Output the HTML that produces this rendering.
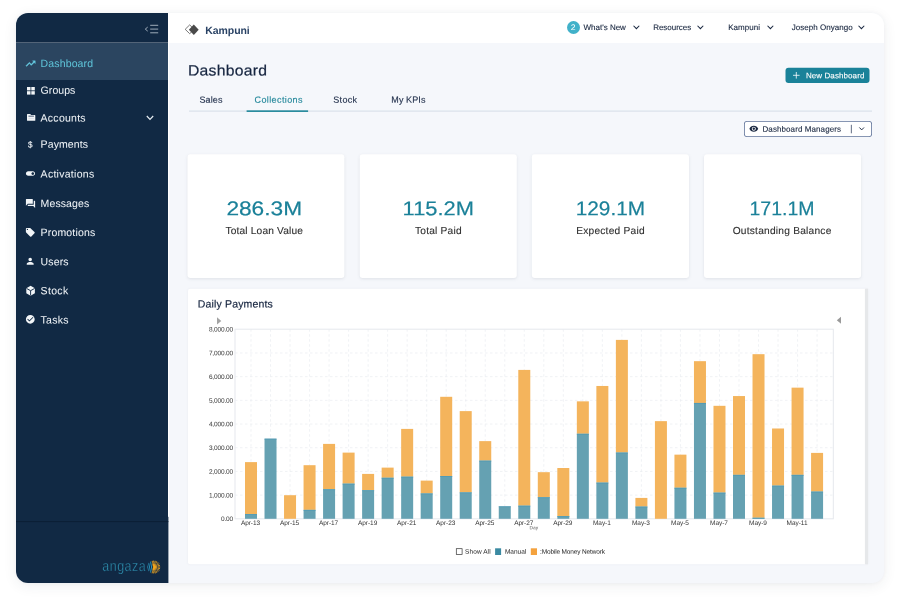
<!DOCTYPE html>
<html lang="en">
<head>
<meta charset="utf-8">
<title>Dashboard</title>
<style>
*{box-sizing:border-box;margin:0;padding:0}
html,body{width:900px;height:602px;background:#fff;overflow:hidden;font-family:"Liberation Sans",sans-serif;}
body{position:relative}
.frame{position:absolute;left:16px;top:13px;width:868px;height:570px;border-radius:12px;overflow:hidden;background:#f5f7fb;box-shadow:0 3px 14px rgba(40,50,70,.075),0 0 4px rgba(40,50,70,.04)}
.o{position:absolute;left:-16px;top:-13px;width:900px;height:602px;will-change:transform}
.abs{position:absolute}
.sidebar{position:absolute;left:16px;top:13px;width:152px;height:570px;background:#112944}
.sidehead{position:absolute;left:16px;top:13px;width:152px;height:30px;border-bottom:1px solid rgba(255,255,255,.28)}
.active{position:absolute;left:16px;top:43px;width:152px;height:37px;background:#2b4560}
.sidefoot{position:absolute;left:16px;top:517px;width:153px;height:66px;background:#112944}.sideline{position:absolute;left:16px;top:521px;width:152.500px;height:1px;background:#0b1d33}
.topbar{position:absolute;left:168px;top:13px;width:716px;height:30px;background:#fff}
.card{position:absolute;background:#fff;border-radius:3px;box-shadow:0 1px 3px rgba(30,40,60,.10)}
.btn{position:absolute;left:785.3px;top:67.8px;width:84.3px;height:15.2px;border-radius:3px;background:#1a8299}
.dd{position:absolute;left:744.2px;top:121.2px;width:127.8px;height:15.5px;border-radius:3px;background:#fff;box-shadow:inset 0 0 0 .8px #60749a}
svg{position:absolute;overflow:visible}
svg text{font-family:"Liberation Sans",sans-serif;white-space:pre}
</style>
</head>
<body>
<div class="frame"><div class="o">

<nav class="sidebar"></nav><div class="sidehead"></div><div class="active"></div><div class="abs" style="left:168px;top:43px;width:1px;height:474px;background:#fff"></div><svg style="left:0;top:0" width="900" height="602" viewBox="0 0 900 602"><rect x="160" y="516.800" width="8.400" height="70" fill="#112944"/><rect x="16" y="521.200" width="152.400" height="0.900" fill="#0b1d33"/></svg>
<svg style="left:144px;top:24px" width="15" height="10" viewBox="0 0 15 10"><g stroke="#c3cdd8" stroke-width="0.8" fill="none"><path d="M6.2 1.3H14.2M6.2 5.1H14.2M6.2 8.8H14.2"/><path d="M3.7 3.1L1.3 5.1L3.7 7.100" stroke-width="0.8"/></g></svg>
<svg style="left:25.1px;top:57.5px" width="11.2" height="11.2" viewBox="0 0 24 24" preserveAspectRatio="none"><path fill="#68cfe5" stroke="#68cfe5" stroke-width="0.8" d="M16 6l2.29 2.29-4.88 4.88-4-4L2 16.59 3.41 18l6-6 4 4 6.3-6.29L22 12V6z"/></svg>
<svg style="left:26.9px;top:87.2px" width="7.8" height="7.6" viewBox="0 0 78 76" preserveAspectRatio="none"><g fill="#f2f5f8"><rect x="0" y="0" width="35" height="34"/><rect x="43" y="0" width="35" height="34"/><rect x="0" y="42" width="35" height="34"/><rect x="43" y="42" width="35" height="34"/></g></svg>
<svg style="left:26.6px;top:113.9px" width="8.3" height="6.9" viewBox="0 0 86 70" preserveAspectRatio="none"><path fill="#f2f5f8" d="M6 0H34L42 9H80Q86 9 86 15V63Q86 69 80 69H6Q0 69 0 63V6Q0 0 6 0Z"/><path d="M15 22H72" stroke="#3b4f6b" stroke-width="9"/><path d="M15 45H72" stroke="#c9d2dc" stroke-width="6"/></svg>
<svg style="left:25.2px;top:168.2px" width="11" height="11" viewBox="0 0 24 24" preserveAspectRatio="none"><path fill="#f2f5f8" d="M17 7H7c-2.76 0-5 2.24-5 5s2.24 5 5 5h10c2.76 0 5-2.24 5-5s-2.24-5-5-5zm0 8c-1.66 0-3-1.34-3-3s1.34-3 3-3 3 1.34 3 3-1.34 3-3 3z"/></svg>
<svg style="left:24.98px;top:197.6px" width="11.04" height="10.8" viewBox="0 0 24 24" preserveAspectRatio="none"><path fill="#f2f5f8" d="M21 6h-2v9H6v2c0 .55.45 1 1 1h11l4 4V7c0-.55-.45-1-1-1zm-4 6V3c0-.55-.45-1-1-1H3c-.55 0-1 .45-1 1v14l4-4h10c.55 0 1-.45 1-1z"/></svg>
<svg style="left:24.7px;top:226.55px" width="10.6" height="10.6" viewBox="0 0 24 24" preserveAspectRatio="none"><path fill="#f2f5f8" d="M21.41 11.58l-9-9C12.05 2.22 11.55 2 11 2H4c-1.1 0-2 .9-2 2v7c0 .55.22 1.05.59 1.42l9 9c.36.36.86.58 1.41.58.55 0 1.05-.22 1.41-.59l7-7c.37-.36.59-.86.59-1.41 0-.55-.23-1.06-.59-1.42zM5.5 7C4.67 7 4 6.33 4 5.5S4.67 4 5.5 4 7 4.67 7 5.5 6.33 7 5.5 7z"/></svg>
<svg style="left:24.9px;top:256.0px" width="10.4" height="10.4" viewBox="0 0 24 24" preserveAspectRatio="none"><path fill="#f2f5f8" d="M12 12c2.21 0 4-1.79 4-4s-1.79-4-4-4-4 1.79-4 4 1.79 4 4 4zm0 2c-2.67 0-8 1.34-8 4v2h16v-2c0-2.66-5.33-4-8-4z"/></svg>
<svg style="left:24.9px;top:284.7px" width="11.2" height="11.4" viewBox="0 0 24 24" preserveAspectRatio="none"><path fill="#f2f5f8" d="M12 1.5L21.2 6.6V17.4L12 22.5L2.8 17.4V6.600Z"/><path d="M12 22V12M12 12L3.2 7.2M12 12L20.8 7.2" stroke="#112944" stroke-width="2" fill="none"/></svg>
<svg style="left:25.0px;top:314.4px" width="10.6" height="10.6" viewBox="0 0 24 24" preserveAspectRatio="none"><path fill="#f2f5f8" d="M12 2C6.48 2 2 6.48 2 12s4.48 10 10 10 10-4.48 10-10S17.52 2 12 2zm-2 15l-5-5 1.41-1.41L10 14.17l7.59-7.59L19 8l-9 9z"/></svg>
<svg style="left:146px;top:114.5px" width="8" height="6" viewBox="0 0 8 6"><path d="M0.8 1L4 4.3L7.2 1" stroke="#e8edf2" stroke-width="1.2" fill="none"/></svg>
<svg style="left:0;top:0" width="900" height="602" viewBox="0 0 900 602"><defs><clipPath id="sunclip"><circle cx="153.8" cy="567" r="6.600"/></clipPath></defs><g clip-path="url(#sunclip)"><g fill="none" stroke="#2d9fc6" stroke-width="0.950"><circle cx="139.2" cy="567" r="8.200"/><circle cx="139.2" cy="567" r="10.250"/><circle cx="139.2" cy="567" r="12.350"/></g><g stroke="#f7aa20" stroke-width="0.85" stroke-dasharray="3.300 0.500 3"><path d="M153.30 566.51L151.90 559.65"/><path d="M153.43 566.50L153.79 559.51"/><path d="M153.55 566.52L155.66 559.85"/><path d="M153.66 566.58L157.37 560.64"/><path d="M153.76 566.66L158.84 561.84"/><path d="M153.84 566.76L159.96 563.36"/><path d="M153.88 566.87L160.66 565.12"/><path d="M153.90 567.00L160.90 567.00"/><path d="M153.88 567.13L160.66 568.88"/><path d="M153.84 567.24L159.96 570.64"/><path d="M153.76 567.34L158.84 572.16"/><path d="M153.66 567.42L157.37 573.36"/><path d="M153.55 567.48L155.66 574.15"/><path d="M153.43 567.50L153.79 574.49"/><path d="M153.30 567.49L151.90 574.35"/></g><ellipse cx="154.300" cy="567" rx="1.400" ry="3" fill="#f5a51c" opacity=".35"/></g></svg>
<header class="topbar"></header>
<svg style="left:184px;top:24px" width="15" height="12" viewBox="0 0 15 12"><path d="M5.7 0.9L10.2 5.3L5.7 9.7L1.2 5.3Z" fill="#fff" stroke="#555" stroke-width="0.8"/><path d="M9.8 0.4L14.7 5.65L9.8 10.9L4.9 5.65Z" fill="#4a4a4a"/></svg>
<div class="abs" style="left:567px;top:20.7px;width:13px;height:13px;border-radius:50%;background:#41b1c9"></div>
<svg style="left:632.5px;top:25.2px" width="6.8" height="4.7" viewBox="0 0 6.4 4.4"><path d="M0.5 0.7L3.2 3.5L5.9 0.7" stroke="#18263f" stroke-width="0.98" fill="none"/></svg>
<svg style="left:696.6999999999999px;top:25.2px" width="6.8" height="4.7" viewBox="0 0 6.4 4.4"><path d="M0.5 0.7L3.2 3.5L5.9 0.7" stroke="#18263f" stroke-width="0.98" fill="none"/></svg>
<svg style="left:767.1999999999999px;top:25.2px" width="6.8" height="4.7" viewBox="0 0 6.4 4.4"><path d="M0.5 0.7L3.2 3.5L5.9 0.7" stroke="#18263f" stroke-width="0.98" fill="none"/></svg>
<svg style="left:858.0px;top:25.2px" width="6.8" height="4.7" viewBox="0 0 6.4 4.4"><path d="M0.5 0.7L3.2 3.5L5.9 0.7" stroke="#18263f" stroke-width="0.98" fill="none"/></svg>
<svg style="left:0;top:0" width="900" height="120" viewBox="0 0 900 120"><rect x="189" y="110.550" width="683" height="1.100" fill="#d7dfe9"/><rect x="246.600" y="110.300" width="61.500" height="1.700" fill="#2a8c9e"/></svg>

<svg style="left:0;top:0" width="900" height="100" viewBox="0 0 900 100"><rect x="785.5" y="67.8" width="84" height="15.2" rx="3" fill="#1a8299"/></svg>
<svg style="left:792.8px;top:72.2px" width="6.600" height="6.600" viewBox="0 0 6.6 6.6"><path d="M3.3 0V6.600M0 3.3H6.600" stroke="#fff" stroke-width="0.8"/></svg>
<div class="dd"></div>
<svg style="left:748.7px;top:124.0px" width="9.6" height="9.6" viewBox="0 0 24 24" preserveAspectRatio="none"><path fill="#18263f" d="M12 4.5C7 4.5 2.73 7.61 1 12c1.73 4.39 6 7.5 11 7.5s9.27-3.11 11-7.5c-1.73-4.39-6-7.5-11-7.5zM12 17c-2.76 0-5-2.24-5-5s2.24-5 5-5 5 2.24 5 5-2.24 5-5 5zm0-8c-1.66 0-3 1.34-3 3s1.34 3 3 3 3-1.34 3-3-1.34-3-3-3z"/></svg>
<svg style="left:850px;top:124px" width="3" height="10" viewBox="0 0 3 10"><path d="M1.350 0.800V9.300" stroke="#2c3b5a" stroke-width="0.75"/></svg>
<svg style="left:859px;top:127.3px" width="5.4" height="3.6" viewBox="0 0 5.4 3.6"><path d="M0.4 0.5L2.7 2.9L5 0.5" stroke="#18263f" stroke-width="0.95" fill="none"/></svg>
<svg style="left:0;top:0;filter:drop-shadow(0 1px 1.500px rgba(30,40,60,.10))" width="900" height="602" viewBox="0 0 900 602"><rect x="187.5" y="154.200" width="156.9" height="123.900" rx="3" fill="#fff"/><rect x="359.7" y="154.200" width="157.1" height="123.900" rx="3" fill="#fff"/><rect x="531.8" y="154.200" width="157.2" height="123.900" rx="3" fill="#fff"/><rect x="704.0" y="154.200" width="157.1" height="123.900" rx="3" fill="#fff"/></svg>
<svg style="left:0;top:0;filter:drop-shadow(0 0.500px 1px rgba(30,40,60,.06))" width="900" height="602" viewBox="0 0 900 602"><rect x="188" y="288.700" width="680" height="275.600" rx="2" fill="#fff"/></svg>
<svg style="left:0;top:0" width="900" height="602" viewBox="0 0 900 602"><rect x="864.900" y="288.700" width="3.100" height="275.600" fill="#e6e8ea"/></svg>
<svg style="left:0;top:0" width="900" height="602" viewBox="0 0 900 602"><rect x="235" y="329.2" width="598.3" height="189.6" fill="#fff" stroke="#e5e8ed" stroke-width="1"/><path d="M235 495.11H833.3M235 471.42H833.3M235 447.73H833.3M235 424.04H833.3M235 400.35H833.3M235 376.66H833.3M235 352.97H833.3M251.00 329.2V518.8M270.52 329.2V518.8M290.04 329.2V518.8M309.56 329.2V518.8M329.08 329.2V518.8M348.60 329.2V518.8M368.12 329.2V518.8M387.64 329.2V518.8M407.16 329.2V518.8M426.68 329.2V518.8M446.20 329.2V518.8M465.72 329.2V518.8M485.24 329.2V518.8M504.76 329.2V518.8M524.28 329.2V518.8M543.80 329.2V518.8M563.32 329.2V518.8M582.84 329.2V518.8M602.36 329.2V518.8M621.88 329.2V518.8M641.40 329.2V518.8M660.92 329.2V518.8M680.44 329.2V518.8M699.96 329.2V518.8M719.48 329.2V518.8M739.00 329.2V518.8M758.52 329.2V518.8M778.04 329.2V518.8M797.56 329.2V518.8M817.08 329.2V518.8" stroke="#eaecf0" stroke-width="0.7" stroke-dasharray="2.5 2.5" fill="none"/><rect x="245.00" y="462.11" width="12" height="52.00" fill="#f4b45c"/><rect x="245.00" y="514.11" width="12" height="4.69" fill="#65a1b2"/><rect x="245.00" y="514.11" width="12" height="0.8" fill="#4f9ab4"/><rect x="264.52" y="438.70" width="12" height="80.10" fill="#65a1b2"/><rect x="264.52" y="438.70" width="12" height="0.8" fill="#4f9ab4"/><rect x="284.04" y="495.20" width="12" height="23.60" fill="#f4b45c"/><rect x="303.56" y="465.19" width="12" height="44.70" fill="#f4b45c"/><rect x="303.56" y="509.89" width="12" height="8.91" fill="#65a1b2"/><rect x="303.56" y="509.89" width="12" height="0.8" fill="#4f9ab4"/><rect x="323.08" y="443.89" width="12" height="45.41" fill="#f4b45c"/><rect x="323.08" y="489.31" width="12" height="29.49" fill="#65a1b2"/><rect x="323.08" y="489.31" width="12" height="0.8" fill="#4f9ab4"/><rect x="342.60" y="452.61" width="12" height="31.08" fill="#f4b45c"/><rect x="342.60" y="483.69" width="12" height="35.11" fill="#65a1b2"/><rect x="342.60" y="483.69" width="12" height="0.8" fill="#4f9ab4"/><rect x="362.12" y="473.91" width="12" height="16.39" fill="#f4b45c"/><rect x="362.12" y="490.30" width="12" height="28.50" fill="#65a1b2"/><rect x="362.12" y="490.30" width="12" height="0.8" fill="#4f9ab4"/><rect x="381.64" y="467.61" width="12" height="10.19" fill="#f4b45c"/><rect x="381.64" y="477.79" width="12" height="41.01" fill="#65a1b2"/><rect x="381.64" y="477.79" width="12" height="0.8" fill="#4f9ab4"/><rect x="401.16" y="428.90" width="12" height="47.81" fill="#f4b45c"/><rect x="401.16" y="476.70" width="12" height="42.10" fill="#65a1b2"/><rect x="401.16" y="476.70" width="12" height="0.8" fill="#4f9ab4"/><rect x="420.68" y="480.61" width="12" height="12.89" fill="#f4b45c"/><rect x="420.68" y="493.50" width="12" height="25.30" fill="#65a1b2"/><rect x="420.68" y="493.50" width="12" height="0.8" fill="#4f9ab4"/><rect x="440.20" y="396.80" width="12" height="79.22" fill="#f4b45c"/><rect x="440.20" y="476.02" width="12" height="42.78" fill="#65a1b2"/><rect x="440.20" y="476.02" width="12" height="0.8" fill="#4f9ab4"/><rect x="459.72" y="411.11" width="12" height="81.33" fill="#f4b45c"/><rect x="459.72" y="492.43" width="12" height="26.37" fill="#65a1b2"/><rect x="459.72" y="492.43" width="12" height="0.8" fill="#4f9ab4"/><rect x="479.24" y="441.12" width="12" height="19.54" fill="#f4b45c"/><rect x="479.24" y="460.66" width="12" height="58.14" fill="#65a1b2"/><rect x="479.24" y="460.66" width="12" height="0.8" fill="#4f9ab4"/><rect x="498.76" y="506.39" width="12" height="12.41" fill="#65a1b2"/><rect x="498.76" y="506.39" width="12" height="0.8" fill="#4f9ab4"/><rect x="518.28" y="369.91" width="12" height="135.79" fill="#f4b45c"/><rect x="518.28" y="505.70" width="12" height="13.10" fill="#65a1b2"/><rect x="518.28" y="505.70" width="12" height="0.8" fill="#4f9ab4"/><rect x="537.80" y="472.18" width="12" height="25.14" fill="#f4b45c"/><rect x="537.80" y="497.31" width="12" height="21.49" fill="#65a1b2"/><rect x="537.80" y="497.31" width="12" height="0.8" fill="#4f9ab4"/><rect x="557.32" y="468.01" width="12" height="48.16" fill="#f4b45c"/><rect x="557.32" y="516.17" width="12" height="2.63" fill="#65a1b2"/><rect x="557.32" y="516.17" width="12" height="0.8" fill="#4f9ab4"/><rect x="576.84" y="401.34" width="12" height="32.46" fill="#f4b45c"/><rect x="576.84" y="433.80" width="12" height="85.00" fill="#65a1b2"/><rect x="576.84" y="433.80" width="12" height="0.8" fill="#4f9ab4"/><rect x="596.36" y="385.97" width="12" height="96.68" fill="#f4b45c"/><rect x="596.36" y="482.65" width="12" height="36.15" fill="#65a1b2"/><rect x="596.36" y="482.65" width="12" height="0.8" fill="#4f9ab4"/><rect x="615.88" y="339.89" width="12" height="112.69" fill="#f4b45c"/><rect x="615.88" y="452.59" width="12" height="66.21" fill="#65a1b2"/><rect x="615.88" y="452.59" width="12" height="0.8" fill="#4f9ab4"/><rect x="635.40" y="497.91" width="12" height="8.72" fill="#f4b45c"/><rect x="635.40" y="506.62" width="12" height="12.18" fill="#65a1b2"/><rect x="635.40" y="506.62" width="12" height="0.8" fill="#4f9ab4"/><rect x="654.92" y="421.15" width="12" height="97.65" fill="#f4b45c"/><rect x="674.44" y="454.65" width="12" height="33.14" fill="#f4b45c"/><rect x="674.44" y="487.79" width="12" height="31.01" fill="#65a1b2"/><rect x="674.44" y="487.79" width="12" height="0.8" fill="#4f9ab4"/><rect x="693.96" y="361.17" width="12" height="41.79" fill="#f4b45c"/><rect x="693.96" y="402.96" width="12" height="115.84" fill="#65a1b2"/><rect x="693.96" y="402.96" width="12" height="0.8" fill="#4f9ab4"/><rect x="713.48" y="405.82" width="12" height="86.85" fill="#f4b45c"/><rect x="713.48" y="492.67" width="12" height="26.13" fill="#65a1b2"/><rect x="713.48" y="492.67" width="12" height="0.8" fill="#4f9ab4"/><rect x="733.00" y="396.06" width="12" height="78.82" fill="#f4b45c"/><rect x="733.00" y="474.88" width="12" height="43.92" fill="#65a1b2"/><rect x="733.00" y="474.88" width="12" height="0.8" fill="#4f9ab4"/><rect x="752.52" y="354.18" width="12" height="163.60" fill="#f4b45c"/><rect x="752.52" y="517.78" width="12" height="1.02" fill="#65a1b2"/><rect x="752.52" y="517.78" width="12" height="0.8" fill="#4f9ab4"/><rect x="772.04" y="428.49" width="12" height="57.19" fill="#f4b45c"/><rect x="772.04" y="485.68" width="12" height="33.12" fill="#65a1b2"/><rect x="772.04" y="485.68" width="12" height="0.8" fill="#4f9ab4"/><rect x="791.56" y="387.65" width="12" height="87.23" fill="#f4b45c"/><rect x="791.56" y="474.88" width="12" height="43.92" fill="#65a1b2"/><rect x="791.56" y="474.88" width="12" height="0.8" fill="#4f9ab4"/><rect x="811.08" y="452.89" width="12" height="38.73" fill="#f4b45c"/><rect x="811.08" y="491.63" width="12" height="27.17" fill="#65a1b2"/><rect x="811.08" y="491.63" width="12" height="0.8" fill="#4f9ab4"/><path d="M217 317.2L221.3 320.9L217 324.600Z" fill="#a3a3a3"/><path d="M841 316.8L836.8 320.3L841 323.800Z" fill="#9a9a9a"/><rect x="456.3" y="548.7" width="5.8" height="5.8" fill="#fff" stroke="#333" stroke-width="0.7"/><rect x="495.1" y="548.3" width="6" height="6.7" fill="#3b8aa2"/><rect x="530.8" y="548.3" width="6.2" height="6.7" fill="#f4a23e"/></svg>
<svg style="left:0;top:0" width="900" height="602" viewBox="0 0 900 602"><text font-size="10.5" fill="#5fc3d8" letter-spacing="0.14" stroke="#5fc3d8" stroke-width="0.04" x="40.60" y="67.00" transform="rotate(0.03 40.6 67.0)">Dashboard</text>
<text font-size="10.5" fill="#eef2f6" letter-spacing="0.06" stroke="#eef2f6" stroke-width="0.04" x="40.60" y="93.70" transform="rotate(0.03 40.6 93.7)">Groups</text>
<text font-size="10.5" fill="#eef2f6" letter-spacing="0.26" stroke="#eef2f6" stroke-width="0.04" x="40.60" y="121.40" transform="rotate(0.03 40.6 121.4)">Accounts</text>
<text font-size="10.5" fill="#eef2f6" letter-spacing="0.11" stroke="#eef2f6" stroke-width="0.04" x="40.60" y="147.70" transform="rotate(0.03 40.6 147.7)">Payments</text>
<text font-size="10.5" fill="#eef2f6" letter-spacing="0.28" stroke="#eef2f6" stroke-width="0.04" x="40.60" y="177.60" transform="rotate(0.03 40.6 177.6)">Activations</text>
<text font-size="10.5" fill="#eef2f6" letter-spacing="0.11" stroke="#eef2f6" stroke-width="0.04" x="40.60" y="206.90" transform="rotate(0.03 40.6 206.9)">Messages</text>
<text font-size="10.5" fill="#eef2f6" letter-spacing="0.17" stroke="#eef2f6" stroke-width="0.04" x="40.60" y="235.90" transform="rotate(0.03 40.6 235.9)">Promotions</text>
<text font-size="10.5" fill="#eef2f6" letter-spacing="0.15" stroke="#eef2f6" stroke-width="0.04" x="40.60" y="265.20" transform="rotate(0.03 40.6 265.2)">Users</text>
<text font-size="10.5" fill="#eef2f6" letter-spacing="0.32" stroke="#eef2f6" stroke-width="0.04" x="40.60" y="294.30" transform="rotate(0.03 40.6 294.3)">Stock</text>
<text font-size="10.5" fill="#eef2f6" letter-spacing="0.25" stroke="#eef2f6" stroke-width="0.04" x="40.60" y="323.60" transform="rotate(0.03 40.6 323.6)">Tasks</text>
<text font-size="8.8" fill="#f2f5f8" stroke="#f2f5f8" stroke-width="0.1" x="0" y="0" transform="translate(27.90 147.50) rotate(0.03) scale(0.92 1)">$</text>
<text x="0" y="0" font-size="15" fill="#33a0c0" stroke="#112944" stroke-width="0.5" letter-spacing="0.6" transform="translate(102.3 570.5) rotate(0.03) scale(0.83 1)">angaza</text>
<text font-size="10.5" fill="#2a4365" letter-spacing="-0.08" font-weight="bold" x="205.30" y="33.90" transform="rotate(0.03 205.3 33.9)">Kampuni</text>
<text font-size="8.2" fill="#fff" text-anchor="middle" x="0" y="0" transform="translate(573.10 29.90) rotate(0.03) scale(1.06 1)">2</text>
<text font-size="8" fill="#18263f" letter-spacing="-0.02" stroke="#18263f" stroke-width="0.12" x="583.60" y="29.90" transform="rotate(0.03 583.6 29.9)">What&#39;s New</text>
<text font-size="8" fill="#18263f" letter-spacing="-0.03" stroke="#18263f" stroke-width="0.12" x="653.20" y="29.90" transform="rotate(0.03 653.2 29.9)">Resources</text>
<text font-size="8" fill="#18263f" letter-spacing="0.03" stroke="#18263f" stroke-width="0.12" x="728.20" y="29.90" transform="rotate(0.03 728.2 29.9)">Kampuni</text>
<text font-size="8" fill="#18263f" letter-spacing="0.03" stroke="#18263f" stroke-width="0.12" x="791.80" y="29.90" transform="rotate(0.03 791.8 29.9)">Joseph Onyango</text>
<text font-size="15" fill="#15243f" letter-spacing="0.27" stroke="#15243f" stroke-width="0.2" x="0" y="0" transform="translate(187.90 75.50) rotate(0.03) scale(1.05 1)">Dashboard</text>
<text font-size="9" fill="#26344f" letter-spacing="0.15" stroke="#26344f" stroke-width="0.15" x="199.40" y="102.70" transform="rotate(0.03 199.4 102.7)">Sales</text>
<text font-size="9" fill="#23879a" letter-spacing="0.38" stroke="#23879a" stroke-width="0.15" x="254.60" y="102.70" transform="rotate(0.03 254.6 102.7)">Collections</text>
<text font-size="9" fill="#26344f" letter-spacing="0.35" stroke="#26344f" stroke-width="0.15" x="333.20" y="102.70" transform="rotate(0.03 333.2 102.7)">Stock</text>
<text font-size="9" fill="#26344f" letter-spacing="0.1" stroke="#26344f" stroke-width="0.15" x="391.30" y="102.70" transform="rotate(0.03 391.3 102.7)">My KPIs</text>
<text font-size="8" fill="#fff" letter-spacing="0.09" stroke="#fff" stroke-width="0.12" x="805.90" y="78.30" transform="rotate(0.03 805.9 78.3)">New Dashboard</text>
<text font-size="8" fill="#18263f" letter-spacing="0.09" stroke="#18263f" stroke-width="0.12" x="762.50" y="131.70" transform="rotate(0.03 762.5 131.7)">Dashboard Managers</text>
<text x="0" y="0" font-size="20" fill="#1b8199" stroke="#1b8199" stroke-width="0.2" text-anchor="middle" transform="translate(264.20 215.25) rotate(0.03) scale(1.135 1)">286.3M</text>
<text font-size="10.2" fill="#303030" letter-spacing="0.16" stroke="#303030" stroke-width="0.12" text-anchor="middle" x="264.28" y="234.10" transform="rotate(0.03 264.3 234.1)">Total Loan Value</text>
<text x="0" y="0" font-size="20" fill="#1b8199" stroke="#1b8199" stroke-width="0.2" text-anchor="middle" transform="translate(438.30 215.25) rotate(0.03) scale(1.095 1)">115.2M</text>
<text font-size="10.2" fill="#303030" letter-spacing="0.2" stroke="#303030" stroke-width="0.12" text-anchor="middle" x="438.40" y="234.10" transform="rotate(0.03 438.4 234.1)">Total Paid</text>
<text x="0" y="0" font-size="20" fill="#1b8199" stroke="#1b8199" stroke-width="0.2" text-anchor="middle" transform="translate(610.40 215.25) rotate(0.03) scale(1.04 1)">129.1M</text>
<text font-size="10.2" fill="#303030" letter-spacing="0.23" stroke="#303030" stroke-width="0.12" text-anchor="middle" x="610.51" y="234.10" transform="rotate(0.03 610.5 234.1)">Expected Paid</text>
<text x="0" y="0" font-size="20" fill="#1b8199" stroke="#1b8199" stroke-width="0.2" text-anchor="middle" transform="translate(782.00 215.25) rotate(0.03) scale(0.975 1)">171.1M</text>
<text font-size="10.2" fill="#303030" letter-spacing="0.23" stroke="#303030" stroke-width="0.12" text-anchor="middle" x="782.12" y="234.10" transform="rotate(0.03 782.1 234.1)">Outstanding Balance</text>
<text font-size="10.5" fill="#15243f" letter-spacing="0.17" stroke="#15243f" stroke-width="0.18" x="197.70" y="307.50" transform="rotate(0.03 197.7 307.5)">Daily Payments</text>
<text font-size="6.5" fill="#333" letter-spacing="-0.15" text-anchor="end" x="233.00" y="521.10" transform="rotate(0.03 233.0 521.1)">0.00</text>
<text font-size="6.5" fill="#333" letter-spacing="-0.15" text-anchor="end" x="233.00" y="497.41" transform="rotate(0.03 233.0 497.4)">1,000.00</text>
<text font-size="6.5" fill="#333" letter-spacing="-0.15" text-anchor="end" x="233.00" y="473.72" transform="rotate(0.03 233.0 473.7)">2,000.00</text>
<text font-size="6.5" fill="#333" letter-spacing="-0.15" text-anchor="end" x="233.00" y="450.03" transform="rotate(0.03 233.0 450.0)">3,000.00</text>
<text font-size="6.5" fill="#333" letter-spacing="-0.15" text-anchor="end" x="233.00" y="426.34" transform="rotate(0.03 233.0 426.3)">4,000.00</text>
<text font-size="6.5" fill="#333" letter-spacing="-0.15" text-anchor="end" x="233.00" y="402.65" transform="rotate(0.03 233.0 402.6)">5,000.00</text>
<text font-size="6.5" fill="#333" letter-spacing="-0.15" text-anchor="end" x="233.00" y="378.96" transform="rotate(0.03 233.0 379.0)">6,000.00</text>
<text font-size="6.5" fill="#333" letter-spacing="-0.15" text-anchor="end" x="233.00" y="355.27" transform="rotate(0.03 233.0 355.3)">7,000.00</text>
<text font-size="6.5" fill="#333" letter-spacing="-0.15" text-anchor="end" x="233.00" y="331.58" transform="rotate(0.03 233.0 331.6)">8,000.00</text>
<text font-size="6.5" fill="#333" letter-spacing="-0.05" text-anchor="middle" x="250.50" y="525.10" transform="rotate(0.03 250.5 525.1)">Apr-13</text>
<text font-size="6.5" fill="#333" letter-spacing="-0.05" text-anchor="middle" x="289.54" y="525.10" transform="rotate(0.03 289.5 525.1)">Apr-15</text>
<text font-size="6.5" fill="#333" letter-spacing="-0.05" text-anchor="middle" x="328.58" y="525.10" transform="rotate(0.03 328.6 525.1)">Apr-17</text>
<text font-size="6.5" fill="#333" letter-spacing="-0.05" text-anchor="middle" x="367.62" y="525.10" transform="rotate(0.03 367.6 525.1)">Apr-19</text>
<text font-size="6.5" fill="#333" letter-spacing="-0.05" text-anchor="middle" x="406.66" y="525.10" transform="rotate(0.03 406.7 525.1)">Apr-21</text>
<text font-size="6.5" fill="#333" letter-spacing="-0.05" text-anchor="middle" x="445.70" y="525.10" transform="rotate(0.03 445.7 525.1)">Apr-23</text>
<text font-size="6.5" fill="#333" letter-spacing="-0.05" text-anchor="middle" x="484.74" y="525.10" transform="rotate(0.03 484.7 525.1)">Apr-25</text>
<text font-size="6.5" fill="#333" letter-spacing="-0.05" text-anchor="middle" x="523.78" y="525.10" transform="rotate(0.03 523.8 525.1)">Apr-27</text>
<text font-size="6.5" fill="#333" letter-spacing="-0.05" text-anchor="middle" x="562.82" y="525.10" transform="rotate(0.03 562.8 525.1)">Apr-29</text>
<text font-size="6.5" fill="#333" letter-spacing="-0.05" text-anchor="middle" x="601.86" y="525.10" transform="rotate(0.03 601.9 525.1)">May-1</text>
<text font-size="6.5" fill="#333" letter-spacing="-0.05" text-anchor="middle" x="640.90" y="525.10" transform="rotate(0.03 640.9 525.1)">May-3</text>
<text font-size="6.5" fill="#333" letter-spacing="-0.05" text-anchor="middle" x="679.94" y="525.10" transform="rotate(0.03 679.9 525.1)">May-5</text>
<text font-size="6.5" fill="#333" letter-spacing="-0.05" text-anchor="middle" x="718.98" y="525.10" transform="rotate(0.03 719.0 525.1)">May-7</text>
<text font-size="6.5" fill="#333" letter-spacing="-0.05" text-anchor="middle" x="758.02" y="525.10" transform="rotate(0.03 758.0 525.1)">May-9</text>
<text font-size="6.5" fill="#333" letter-spacing="-0.05" text-anchor="middle" x="797.06" y="525.10" transform="rotate(0.03 797.1 525.1)">May-11</text>
<text font-size="4.8" fill="#555" text-anchor="middle" x="533.80" y="529.30" transform="rotate(0.03 533.8 529.3)">Day</text>
<text font-size="6.5" fill="#222" letter-spacing="0.08" x="465.10" y="553.80" transform="rotate(0.03 465.1 553.8)">Show All</text>
<text font-size="6.5" fill="#222" x="504.90" y="553.80" transform="rotate(0.03 504.9 553.8)">Manual</text>
<text font-size="6.5" fill="#222" letter-spacing="-0.15" x="540.00" y="553.80" transform="rotate(0.03 540.0 553.8)">:Mobile Money Network</text></svg>
</div></div>
</body>
</html>
